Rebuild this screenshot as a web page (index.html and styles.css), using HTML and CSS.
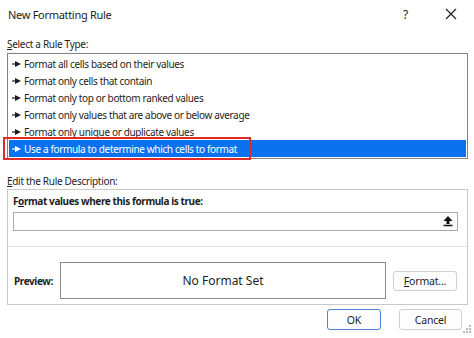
FILE: index.html
```html
<!DOCTYPE html>
<html lang="en">
<head>
  <meta charset="UTF-8">
  <title>New Formatting Rule</title>
  <link rel="stylesheet" href="styles.css">
</head>
<body>
  <div class="dialog">
    <div class="titlebar">
      <span class="title">New Formatting Rule</span>
      <span class="help">?</span>
      <span class="close">
        <svg width="12" height="12" viewBox="0 0 12 12"><path d="M1 1L11 11M11 1L1 11" stroke="#222" stroke-width="1.2"/></svg>
      </span>
    </div>

    <div class="label"><u>S</u>elect a Rule Type:</div>
    <div class="rule-list">
      <div class="rule"><svg class="arrow" width="9" height="6" viewBox="0 0 9 6"><path d="M0 3h4" stroke="currentColor" stroke-width="1.2"/><path d="M3 0l6 3-6 3z" fill="currentColor"/></svg><span>Format all cells based on their values</span></div>
      <div class="rule"><svg class="arrow" width="9" height="6" viewBox="0 0 9 6"><path d="M0 3h4" stroke="currentColor" stroke-width="1.2"/><path d="M3 0l6 3-6 3z" fill="currentColor"/></svg><span>Format only cells that contain</span></div>
      <div class="rule"><svg class="arrow" width="9" height="6" viewBox="0 0 9 6"><path d="M0 3h4" stroke="currentColor" stroke-width="1.2"/><path d="M3 0l6 3-6 3z" fill="currentColor"/></svg><span>Format only top or bottom ranked values</span></div>
      <div class="rule"><svg class="arrow" width="9" height="6" viewBox="0 0 9 6"><path d="M0 3h4" stroke="currentColor" stroke-width="1.2"/><path d="M3 0l6 3-6 3z" fill="currentColor"/></svg><span>Format only values that are above or below average</span></div>
      <div class="rule"><svg class="arrow" width="9" height="6" viewBox="0 0 9 6"><path d="M0 3h4" stroke="currentColor" stroke-width="1.2"/><path d="M3 0l6 3-6 3z" fill="currentColor"/></svg><span>Format only <u>u</u>nique or duplicate values</span></div>
      <div class="rule selected"><svg class="arrow" width="9" height="6" viewBox="0 0 9 6"><path d="M0 3h4" stroke="currentColor" stroke-width="1.2"/><path d="M3 0l6 3-6 3z" fill="currentColor"/></svg><span>Use a formula to determine which cells to format</span></div>
      <div class="highlight"></div>
    </div>

    <div class="label desc-label"><u>E</u>dit the Rule Description:</div>
    <div class="desc">
      <div class="formula">
        <div class="bold-label">F<u>o</u>rmat values where this formula is true:</div>
        <div class="input">
          <span class="collapse">
            <svg width="10" height="11" viewBox="0 0 10 11"><path d="M5 0L9.5 5H6.5V8H3.5V5H0.5Z" fill="#111"/><path d="M0.5 9.5H9.5" stroke="#111" stroke-width="1.5"/></svg>
          </span>
        </div>
      </div>
      <div class="preview-row">
        <span class="bold-label preview-label">Preview:</span>
        <div class="preview">No Format Set</div>
        <button class="btn format-btn"><u>F</u>ormat...</button>
      </div>
    </div>

    <div class="footer">
      <button class="btn ok">OK</button>
      <button class="btn">Cancel</button>
    </div>
    <svg class="grip" width="9" height="9" viewBox="0 0 9 9">
      <rect x="6" y="0" width="2" height="2" fill="#bbb"/>
      <rect x="3" y="3" width="2" height="2" fill="#bbb"/>
      <rect x="6" y="3" width="2" height="2" fill="#bbb"/>
      <rect x="0" y="6" width="2" height="2" fill="#bbb"/>
      <rect x="3" y="6" width="2" height="2" fill="#bbb"/>
      <rect x="6" y="6" width="2" height="2" fill="#bbb"/>
    </svg>
  </div>
</body>
</html>
```

FILE: styles.css
```css
body {
  margin: 0;
  background: #fff;
  font-family: "Noto Sans", "Open Sans", sans-serif;
  font-size: 10px;
  letter-spacing: -0.3px;
  color: #1e1e1e;
}
u {
  text-decoration: underline;
  text-underline-offset: 1px;
}
.dialog {
  position: relative;
  width: 474px;
  height: 338px;
  box-sizing: border-box;
  padding: 0 6px 0 7px;
}
.titlebar {
  display: flex;
  align-items: center;
  height: 28px;
  padding-left: 1px;
}
.title {
  font-size: 11px;
  flex: 1;
}
.help {
  font-size: 12px;
  width: 16px;
  margin-right: 26px;
}
.close {
  display: flex;
  margin-right: 11px;
}
.label {
  height: 25px;
  line-height: 32px;
}
.rule-list {
  position: relative;
  border: 1px solid #838383;
  height: 103px;
  padding: 1px 1px 0;
}
.rule {
  height: 17px;
  padding-left: 3px;
  display: flex;
  align-items: center;
  white-space: nowrap;
  letter-spacing: -0.35px;
}
.arrow {
  margin-right: 3px;
  flex: none;
}
.rule.selected {
  background: #0a72ef;
  color: #fff;
}
.highlight {
  position: absolute;
  left: -5px;
  top: 83px;
  width: 244px;
  height: 19px;
  border: 2px solid #e02a2a;
}
.desc-label {
  height: 30px;
  line-height: 44px;
}
.desc {
  border: 1px solid #c9c9c9;
}
.formula {
  padding: 3px 9px 15px 5px;
  border-bottom: 1px solid #e3e3e3;
}
.bold-label {
  font-weight: bold;
  font-size: 10px;
  letter-spacing: -0.4px;
}
.formula .bold-label {
  line-height: 16px;
  margin-bottom: 3px;
}
.input {
  height: 17px;
  border: 1px solid #a9a9a9;
  display: flex;
  justify-content: flex-end;
  align-items: center;
  padding-right: 2px;
}
.collapse {
  display: flex;
  width: 15px;
  height: 15px;
  align-items: center;
  justify-content: center;
  background: #fbfbfb;
}
.preview-row {
  display: flex;
  align-items: center;
  height: 37px;
  padding: 15px 10px 5px 6px;
}
.preview-label {
  width: 46px;
}
.preview {
  width: 324px;
  height: 35px;
  border: 1px solid #8a8a8a;
  display: flex;
  align-items: center;
  justify-content: center;
  font-size: 12px;
  letter-spacing: 0;
}
.btn {
  font-family: inherit;
  font-size: 10.5px;
  letter-spacing: -0.2px;
  color: #1e1e1e;
  background: #fdfdfd;
  border: 1px solid #d0d0d0;
  border-radius: 3px;
  padding: 0;
}
.format-btn {
  margin-left: auto;
  width: 64px;
  height: 20px;
}
.footer {
  display: flex;
  justify-content: flex-end;
  gap: 18px;
  margin-top: 4px;
  padding-right: 6px;
}
.footer .btn {
  width: 63px;
  height: 21px;
}
.footer .ok {
  width: 54px;
  border-color: #4a86d6;
}
.grip {
  position: absolute;
  right: 2px;
  bottom: 4px;
}
```
